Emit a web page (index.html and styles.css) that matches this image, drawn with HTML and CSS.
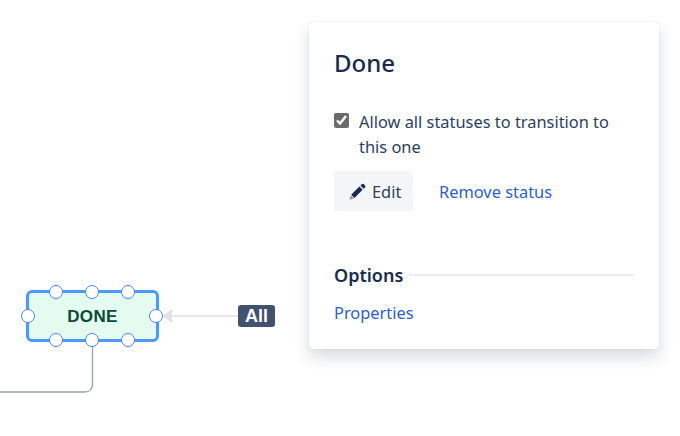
FILE: index.html
```html
<!DOCTYPE html>
<html lang="en">
<head>
    <meta charset="UTF-8">
    <title>Workflow editor</title>
    <link rel="stylesheet" href="styles.css">
</head>
<body>
    <div class="canvas">
        <svg class="lines" width="680" height="436" viewBox="0 0 680 436">
            <path d="M92.5 341 V384 Q92.5 392 84.5 392 H0" fill="none" stroke="#97a0af" stroke-width="1.3"/>
            <path d="M172 316 H240" fill="none" stroke="#dfe1e6" stroke-width="1.5"/>
            <path d="M162 316 L172 309.500 V322.500 Z" fill="#dfe1e6"/>
        </svg>

        <div class="node">DONE</div>
        <span class="handle" style="left: 56px; top: 292px"></span>
        <span class="handle" style="left: 92px; top: 292px"></span>
        <span class="handle" style="left: 128px; top: 292px"></span>
        <span class="handle" style="left: 28px; top: 316px"></span>
        <span class="handle" style="left: 156px; top: 316px"></span>
        <span class="handle" style="left: 56px; top: 340px"></span>
        <span class="handle" style="left: 92px; top: 340px"></span>
        <span class="handle" style="left: 128px; top: 340px"></span>

        <div class="all-label">All</div>

        <div class="panel">
            <h2 class="panel-title">Done</h2>
            <label class="check-row">
                <input type="checkbox" checked>
                <span>Allow all statuses to transition to this one</span>
            </label>
            <div class="actions">
                <button class="edit-btn">
                    <svg width="17" height="17" viewBox="0 0 17 17">
                        <path d="M12.800 1.200 Q13.800 0.400 14.800 1.200 L16 2.400 Q16.800 3.400 16 4.400 L14.600 5.800 L11.400 2.600 Z M10.400 3.600 L13.600 6.800 L5.400 15 L2.200 11.800 Z" fill="#172b4d"/>
                        <path d="M1.700 12.500 L4.700 15.500 L0.500 16.700 Z" fill="#8993a4"/>
                    </svg>
                    Edit
                </button>
                <a class="link" href="#">Remove status</a>
            </div>
            <div class="options-head">
                <h3>Options</h3>
                <div class="rule"></div>
            </div>
            <a class="link" href="#">Properties</a>
        </div>
    </div>
</body>
</html>
```

FILE: styles.css
```css
body {
    margin: 0;
    background-color: #fff;
    font-family: "Noto Sans", "Open Sans", sans-serif;
    color: #2c3e5d;
}

.canvas {
    position: relative;
    width: 680px;
    height: 436px;
    overflow: hidden;
}

.lines {
    position: absolute;
    left: 0;
    top: 0;
}

.node {
    position: absolute;
    left: 26px;
    top: 290px;
    width: 133px;
    height: 52px;
    box-sizing: border-box;
    padding-top: 1px;
    display: flex;
    justify-content: center;
    align-items: center;
    background-color: #e3fcef;
    border: 3px solid #4c9aff;
    border-radius: 6px;
    color: #0b4a35;
    font-family: "Liberation Sans", Arial, sans-serif;
    font-size: 17px;
    font-weight: bold;
    letter-spacing: 0.4px;
}

.handle {
    position: absolute;
    width: 14px;
    height: 14px;
    box-sizing: border-box;
    margin: -7px 0 0 -7px;
    background-color: #fff;
    border: 1.500px solid #4c83e8;
    border-radius: 50%;
}

.all-label {
    position: absolute;
    left: 238px;
    top: 305px;
    width: 37px;
    height: 22px;
    display: flex;
    justify-content: center;
    align-items: center;
    background-color: #42526e;
    border-radius: 3px;
    color: #fff;
    font-family: "Liberation Sans", Arial, sans-serif;
    font-size: 18px;
    font-weight: bold;
}

.panel {
    position: absolute;
    left: 309px;
    top: 22px;
    width: 350px;
    height: 327px;
    box-sizing: border-box;
    padding: 25px 25px 0;
    background-color: #fff;
    border-radius: 4px;
    box-shadow: 0 8px 16px rgba(9, 30, 66, 0.16), 0 0 1px rgba(9, 30, 66, 0.25);
}

.panel-title {
    margin: 0;
    font-size: 24px;
    font-weight: 500;
    line-height: 32px;
    color: #172b4d;
}

.check-row {
    display: flex;
    align-items: flex-start;
    margin-top: 30px;
    font-size: 16.400px;
    line-height: 25px;
}

.check-row input {
    width: 15px;
    height: 15px;
    margin: 4px 10px 0 0;
    flex-shrink: 0;
    accent-color: #6b6b6b;
}

.actions {
    display: flex;
    align-items: center;
    gap: 26px;
    margin-top: 12px;
}

.edit-btn {
    display: flex;
    align-items: center;
    gap: 6px;
    width: 79px;
    height: 40px;
    padding: 0 0 0 15px;
    background-color: #f4f5f7;
    border: none;
    border-radius: 3px;
    color: #2c3e5d;
    font-family: inherit;
    font-size: 16.400px;
}

.link {
    color: #2f5fc4;
    font-size: 16.400px;
    text-decoration: none;
}

.options-head {
    display: flex;
    align-items: center;
    gap: 6px;
    margin-top: 51px;
    margin-bottom: 13px;
}

.options-head h3 {
    margin: 0;
    font-size: 18px;
    font-weight: 600;
    line-height: 26px;
    color: #172b4d;
}

.rule {
    flex: 1;
    height: 2px;
    background-color: #ebecf0;
}
```
